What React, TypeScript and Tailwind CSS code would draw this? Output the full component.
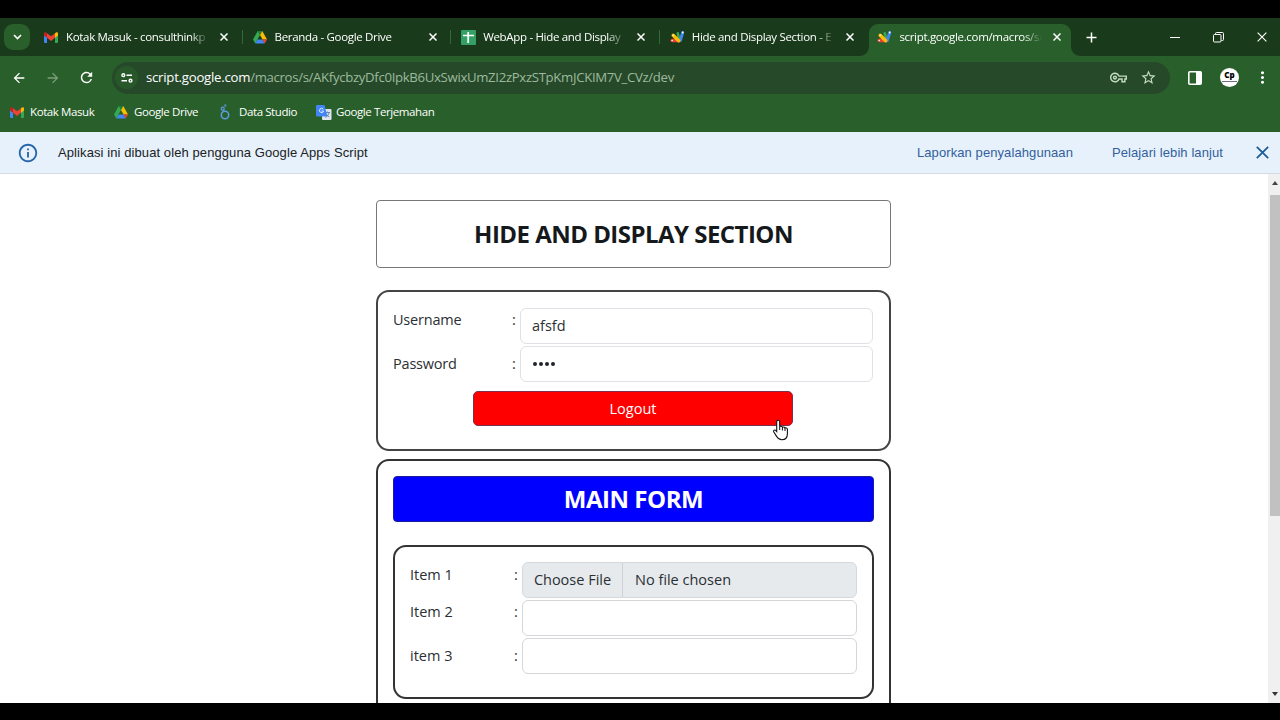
import React from "react";
import { MdArrowBack, MdArrowForward, MdInfoOutline, MdMoreVert, MdOutlineVpnKey, MdRefresh, MdStarBorder } from "react-icons/md";

function GmailIcon({ className = "" }: { className?: string }) {
  return (
    <svg width="14" height="11" viewBox="0 0 14 11" className={className}>
      <path d="M0 2h3v9H1a1 1 0 0 1-1-1z" fill="#4285f4" />
      <path d="M11 2h3v8a1 1 0 0 1-1 1h-2z" fill="#34a853" />
      <path d="M11 1.2 12 .4c.9-.6 2 0 2 1V3.4l-3 2.4z" fill="#fbbc04" />
      <path d="M3 1.2 2 .4C1.100-.2 0 .3 0 1.400v2l3 2.400z" fill="#c5221f" />
      <path d="M3 1.2 7 4.300l4-3.100v4.600L7 8.900 3 5.800z" fill="#ea4335" />
    </svg>
  );
}

function DriveIcon() {
  return (
    <svg width="14" height="13" viewBox="0 0 14 13">
      <path d="M4.700 0h4.600L7 4z" fill="#188038" />
      <path d="M4.700 0 7 4 2.300 12.500 0 8.500z" fill="#34a853" />
      <path d="M9.300 0 14 8.500H9.500L7 4z" fill="#fbbc04" />
      <path d="M4.500 8.500h5l2.200 4H2.300z" fill="#4285f4" />
      <path d="M9.500 8.500H14l-2.300 4z" fill="#ea4335" />
    </svg>
  );
}

function SheetsIcon() {
  return (
    <svg width="15" height="15" viewBox="0 0 15 15">
      <rect width="15" height="15" rx="1" fill="#34a065" />
      <path d="M7.200 2v11M2 5.500h11" stroke="#fff" strokeWidth="1.700" />
    </svg>
  );
}

function AppsScriptIcon() {
  return (
    <svg width="15" height="14" viewBox="0 0 15 14">
      <path d="M2.300 10.500h7" stroke="#ea4335" strokeWidth="3.600" strokeLinecap="round" />
      <path d="M7.800 3.200 9.300 10" stroke="#34a853" strokeWidth="2.600" strokeLinecap="round" />
      <path d="M12.700 2.500 10.300 10.500" stroke="#4285f4" strokeWidth="3" strokeLinecap="round" />
      <path d="M3.200 5.200 8.700 10.800" stroke="#fbbc04" strokeWidth="3.400" strokeLinecap="round" />
      <circle cx="12.700" cy="2.500" r=".9" fill="#fff" />
      <circle cx="3.200" cy="5.200" r=".8" fill="#fff" />
      <circle cx="2.200" cy="10.500" r=".8" fill="#fff" />
    </svg>
  );
}

function LookerIcon() {
  return (
    <svg width="12" height="16" viewBox="0 0 12 16" fill="none" stroke="#5b9be0">
      <circle cx="6" cy="11" r="3.700" strokeWidth="1.600" />
      <circle cx="3.700" cy="4.700" r="1.500" strokeWidth="1.200" />
      <circle cx="6.300" cy="1.500" r=".9" strokeWidth=".9" />
      <path d="M4.500 6 5.300 7.500" strokeWidth="1.200" />
    </svg>
  );
}

function TranslateIcon() {
  return (
    <svg width="16" height="15" viewBox="0 0 16 15">
      <rect x="6" y="4" width="9.500" height="11" rx="1" fill="#dfe5ee" />
      <path d="M9 7.500h5M11.500 6.500v1M13 8c-.5 2-2 3.500-3.500 4.500M10.300 9c.7 1.300 1.700 2.300 2.900 3" stroke="#5d7f9d" strokeWidth=".9" fill="none" />
      <path d="M1 0h7.500l3 11.500H1a1 1 0 0 1-1-1V1a1 1 0 0 1 1-1z" fill="#4285f4" />
      <path d="M7.300 4.300A2.100 2.100 0 1 0 7.600 6H5.600" stroke="#e3edff" strokeWidth="1" fill="none" />
    </svg>
  );
}

function CloseIcon({ size = 8, stroke = 1.5 }: { size?: number; stroke?: number }) {
  return (
    <svg width={size} height={size} viewBox="0 0 8 8" className="shrink-0">
      <path d="M.5.5l7 7M7.500.5l-7 7" stroke="currentColor" strokeWidth={stroke} />
    </svg>
  );
}

const tabs = [
  { title: "Kotak Masuk - consulthinkp", icon: <GmailIcon /> },
  { title: "Beranda - Google Drive", icon: <DriveIcon /> },
  { title: "WebApp - Hide and Display", icon: <SheetsIcon /> },
  { title: "Hide and Display Section - E", icon: <AppsScriptIcon /> },
  { title: "script.google.com/macros/s/", icon: <AppsScriptIcon />, active: true },
];

const bookmarks = [
  { label: "Kotak Masuk", icon: <GmailIcon />, width: "w-[104px]" },
  { label: "Google Drive", icon: <DriveIcon />, width: "w-[105px]" },
  { label: "Data Studio", icon: <LookerIcon />, width: "w-[97px]" },
  { label: "Google Terjemahan", icon: <TranslateIcon />, width: "w-[130px]" },
];

function TabStrip() {
  return (
    <div className="flex h-[38px] bg-[#1a3b1b] text-white">
      <div className="ml-1 mt-[6px] mr-1 flex h-[26px] w-[26px] items-center justify-center rounded-[9px] bg-[#295f2b]">
        <svg width="9" height="6" viewBox="0 0 9 6" fill="none">
          <path d="M1 1l3.500 3.500L8 1" stroke="#fff" strokeWidth="1.600" />
        </svg>
      </div>
      {tabs.map((tab, index) => (
        <div key={tab.title} className="flex h-[38px] w-[208.6px] shrink-0 items-end">
          <div
            className={`relative flex items-center ${
              tab.active ? "ml-px h-[32px] w-[202px] rounded-t-[9px] bg-[#295f2b] pb-[6px] pl-[8px]" : "h-[32px] w-full pb-[6px] pl-[10px]"
            }`}
          >
            {tab.active && (
              <>
                <svg className="absolute bottom-0 -left-[9px]" width="9" height="9" viewBox="0 0 9 9">
                  <path d="M9 0v9H0a9 9 0 0 0 9-9z" fill="#295f2b" />
                </svg>
                <svg className="absolute -right-[9px] bottom-0" width="9" height="9" viewBox="0 0 9 9">
                  <path d="M0 0v9h9a9 9 0 0 1-9-9z" fill="#295f2b" />
                </svg>
              </>
            )}
            <span className="flex w-[22px] shrink-0">{tab.icon}</span>
            <span className="w-[145px] shrink-0 overflow-hidden text-[11.500px] tracking-[-0.32px] whitespace-nowrap [mask-image:linear-gradient(to_right,#000_124px,transparent_143px)]">
              {tab.title}
            </span>
            <span className="ml-[9px] flex">
              <CloseIcon />
            </span>
            {index < 3 && <span className="ml-auto h-[14px] w-px bg-[#2f6b32]" />}
          </div>
        </div>
      ))}
      <div className="ml-[9px] flex flex-1 items-center">
        <svg width="11" height="11" viewBox="0 0 11 11">
          <path d="M5.500.5v10M.5 5.500h10" stroke="#fff" strokeWidth="1.500" />
        </svg>
        <div className="ml-auto flex items-center gap-[33px] pr-[13px]">
          <svg width="10" height="10" viewBox="0 0 10 10">
            <path d="M0 5.500h10" stroke="#fff" />
          </svg>
          <svg width="11" height="11" viewBox="0 0 11 11" fill="none" stroke="#fff">
            <rect x=".5" y="2.500" width="7.500" height="7.500" rx="1" />
            <path d="M2.500 2.500V1.500a1 1 0 0 1 1-1h6a1 1 0 0 1 1 1v6a1 1 0 0 1-1 1H8.500" />
          </svg>
          <CloseIcon size={10} stroke={0.9} />
        </div>
      </div>
    </div>
  );
}

function Toolbar() {
  return (
    <div className="flex h-[43px] items-center bg-[#295f2b] text-white">
      <div className="flex w-[112px] items-center gap-[18px] pl-[11px]">
        <MdArrowBack size={16} />
        <MdArrowForward size={16} className="text-[#7d9f7b]" />
        <MdRefresh size={17} className="-ml-px" />
      </div>
      <div className="flex h-[32px] w-[1058px] items-center rounded-full bg-[#26492a] pl-[3px] pr-[13px]">
        <span className="flex h-[23px] w-[23px] items-center justify-center rounded-full bg-[#295f2b]/70">
          <svg width="12" height="10" viewBox="0 0 12 10" fill="none" stroke="#fff" strokeWidth="1.400">
            <circle cx="2.300" cy="2.200" r="1.400" />
            <path d="M5.500 2.200H11M.5 7.700H6" />
            <circle cx="9.500" cy="7.700" r="1.400" />
          </svg>
        </span>
        <span className="ml-[8px] text-[13.200px] tracking-[-0.33px] whitespace-nowrap text-[#9dba9c]">
          <span className="tracking-[-0.25px] text-white">script.google.com</span>
          /macros/s/AKfycbzyDfc0IpkB6UxSwixUmZI2zPxzSTpKmJCKIM7V_CVz/dev
        </span>
        <div className="ml-auto flex items-center gap-[13px] text-[#c3dcc1]">
          <MdOutlineVpnKey size={17} />
          <MdStarBorder size={17} />
        </div>
      </div>
      <div className="flex flex-1 items-center pl-[18px]">
        <svg width="14" height="14" viewBox="0 0 14 14">
          <rect x=".8" y=".8" width="12.400" height="12.400" rx="1" fill="none" stroke="#fff" strokeWidth="1.600" />
          <path d="M8 1h5v12H8z" fill="#fff" />
        </svg>
        <span className="ml-[18px] flex h-[19px] w-[19px] flex-col items-center rounded-full bg-white pt-[2px]">
          <span className="text-[8px] leading-[10px] font-black text-black">Cp</span>
          <span className="mt-px h-px w-[15px] bg-gray-500" />
        </span>
        <MdMoreVert size={19} className="ml-[14px]" />
      </div>
    </div>
  );
}

function BookmarksBar() {
  return (
    <div className="flex h-[33px] bg-[#295f2b] pl-[10px] text-[11.500px] tracking-[-0.4px] text-white">
      {bookmarks.map((item) => (
        <div key={item.label} className={`flex h-[26px] items-center ${item.width}`}>
          <span className="flex w-[20px] shrink-0">{item.icon}</span>
          <span className="whitespace-nowrap">{item.label}</span>
        </div>
      ))}
    </div>
  );
}

function InfoBar() {
  return (
    <div className="flex h-[42px] items-center border-b border-[#d3dae0] bg-[#e6f1fb] pr-[11px] pl-[17px] font-['Liberation_Sans',Arial,sans-serif] text-[13px] tracking-[0.09px] text-[#202124]">
      <MdInfoOutline size={22} className="text-[#2766a8]" />
      <span className="ml-[19px]">Aplikasi ini dibuat oleh pengguna Google Apps Script</span>
      <div className="ml-auto flex items-center text-[#345f9c]">
        <span>Laporkan penyalahgunaan</span>
        <span className="ml-[39px]">Pelajari lebih lanjut</span>
        <span className="ml-[33px] flex text-[#1b5a9b]">
          <CloseIcon size={13} stroke={1.1} />
        </span>
      </div>
    </div>
  );
}

function LoginCard() {
  return (
    <div className="relative mt-[22px] h-[161px] rounded-[13px] border-2 border-[#444] pt-[16px] pr-[16px] pl-[15px]">
      <div className="flex">
        <span className="w-[119px] pt-[2px] leading-[20px] tracking-[-0.2px]">Username</span>
        <span className="w-[8px] pt-[2px] leading-[20px]">:</span>
        <div className="flex h-[36px] flex-1 items-center rounded-[6px] border border-[#dee2e6] px-[11px]">afsfd</div>
      </div>
      <div className="mt-[2px] flex">
        <span className="w-[119px] pt-[8px] leading-[20px] tracking-[-0.2px]">Password</span>
        <span className="w-[8px] pt-[8px] leading-[20px]">:</span>
        <div className="flex h-[36px] flex-1 items-center gap-[2px] rounded-[6px] border border-[#dee2e6] px-[12px]">
          {[0, 1, 2, 3].map((dot) => (
            <span key={dot} className="h-[4px] w-[4px] rounded-full bg-[#212529]" />
          ))}
        </div>
      </div>
      <button className="mt-[9px] ml-[80px] block h-[35px] w-[320px] rounded-[5px] border border-[#7a3050] bg-[#ff0000] text-white">
        Logout
      </button>
      <svg className="absolute top-[127px] left-[394px]" width="18" height="22" viewBox="0 0 18 22">
        <path
          d="M6.200 1.200c.9 0 1.500.6 1.500 1.500v5c.3-.7 2.500-.7 2.800.6.500-.6 2.300-.4 2.500.8.600-.5 2.400-.2 2.400 1.400v4.300c0 3.700-2.200 6-5.600 6-2.500 0-3.900-1.100-5.100-3.200l-3-4.900c-.6-1.300 1-2.300 2-1.300l1 1.200V2.700c0-.9.6-1.500 1.500-1.500z"
          fill="#fff"
          stroke="#111"
          strokeWidth="1.100"
        />
        <path d="M7.700 7.500v3.500M10.400 8.500v3M13 9.500v2.500" stroke="#111" strokeWidth="1" />
      </svg>
    </div>
  );
}

function MainForm() {
  return (
    <div className="mt-[8px] h-[300px] rounded-[13px] border-2 border-[#333] px-[15px] pt-[15px]">
      <div className="flex h-[46px] items-center justify-center rounded-[4px] border border-[#1c1c9a] bg-[#0000ff] text-[24px] font-bold text-white">
        <span className="tracking-[-0.45px]">MAIN FORM</span>
      </div>
      <div className="mt-[23px] h-[154px] rounded-[13px] border-2 border-[#333] pt-[15px] pr-[15px] pl-[15px]">
        <div className="flex">
          <span className="w-[104px] pt-[3px] leading-[20px]">Item 1</span>
          <span className="w-[8px] pt-[3px] leading-[20px]">:</span>
          <div className="flex h-[36px] flex-1 rounded-[6px] border border-[#d4d9dd] bg-[#e6eaed]">
            <span className="flex w-[100px] items-center justify-center border-r border-[#cdd2d6]">Choose File</span>
            <span className="flex items-center pl-[12px]">No file chosen</span>
          </div>
        </div>
        <div className="mt-[2px] flex">
          <span className="w-[104px] pt-[2px] leading-[20px]">Item 2</span>
          <span className="w-[8px] pt-[2px] leading-[20px]">:</span>
          <div className="h-[36px] flex-1 rounded-[6px] border border-[#d4d6d9]" />
        </div>
        <div className="mt-[2px] flex">
          <span className="w-[104px] pt-[8px] leading-[20px]">item 3</span>
          <span className="w-[8px] pt-[8px] leading-[20px]">:</span>
          <div className="h-[36px] flex-1 rounded-[6px] border border-[#d4d6d9]" />
        </div>
      </div>
    </div>
  );
}

function Scrollbar() {
  return (
    <div className="flex w-[12px] flex-col items-center bg-[#f0f0f0] pl-[2px]">
      <svg width="8" height="21" viewBox="0 0 8 21">
        <path d="M1 11l3-4 3 4z" fill="#444" />
      </svg>
      <div className="h-[321px] w-full bg-[#c1c1c1]" />
      <svg className="mt-auto" width="8" height="17" viewBox="0 0 8 17">
        <path d="M1 6l3 4 3-4z" fill="#333" />
      </svg>
    </div>
  );
}

export default function App() {
  return (
    <div className="flex h-[720px] w-[1280px] flex-col overflow-hidden bg-black pt-[18px] font-['Open_Sans','Noto_Sans',sans-serif]">
      <TabStrip />
      <Toolbar />
      <BookmarksBar />
      <InfoBar />
      <div className="flex h-[529px] overflow-hidden bg-white">
        <main className="flex-1 pl-[376px] text-[14.500px] text-[#2b2f33]">
          <div className="w-[515px] pt-[26px]">
            <div className="flex h-[68px] items-center justify-center rounded-[4px] border border-[#777] text-[#15191c]">
              <h1 className="text-[24px] font-bold tracking-[-0.53px] whitespace-nowrap">HIDE AND DISPLAY SECTION</h1>
            </div>
            <LoginCard />
            <MainForm />
          </div>
        </main>
        <Scrollbar />
      </div>
    </div>
  );
}
